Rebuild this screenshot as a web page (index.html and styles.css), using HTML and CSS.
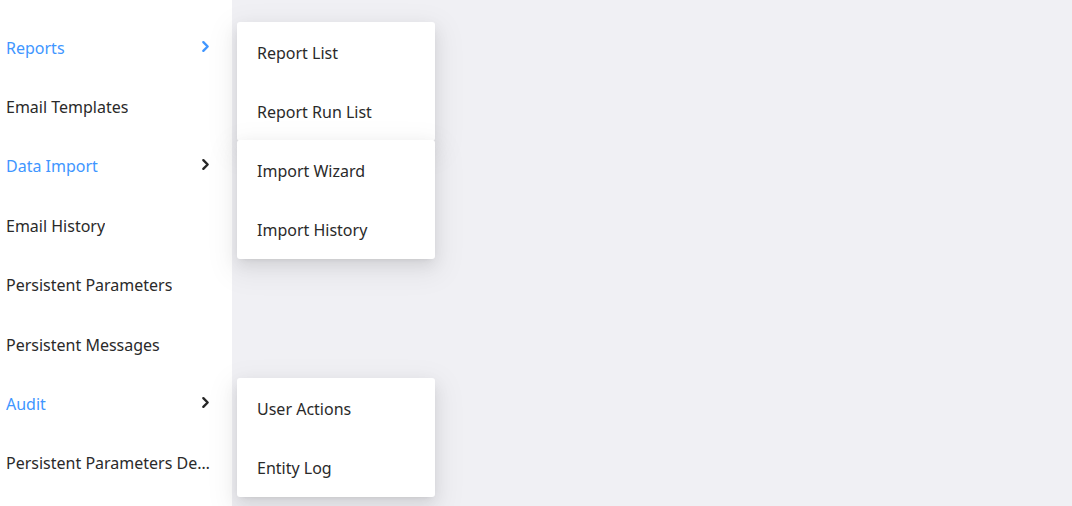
FILE: index.html
```html
<!DOCTYPE html>
<html>
<head>
<meta charset="utf-8">
<link rel="stylesheet" href="styles.css">
</head>
<body>
<div class="page">
  <nav class="sidebar">
    <ul class="menu">
      <li class="item active"><span class="label">Reports</span><svg class="chev" viewBox="0 0 8 12"><path d="M2 2l4 4-4 4" /></svg></li>
      <li class="item"><span class="label">Email Templates</span></li>
      <li class="item active-sub"><span class="label">Data Import</span><svg class="chev" viewBox="0 0 8 12"><path d="M2 2l4 4-4 4" /></svg></li>
      <li class="item"><span class="label">Email History</span></li>
      <li class="item"><span class="label">Persistent Parameters</span></li>
      <li class="item"><span class="label">Persistent Messages</span></li>
      <li class="item active-sub"><span class="label">Audit</span><svg class="chev" viewBox="0 0 8 12"><path d="M2 2l4 4-4 4" /></svg></li>
      <li class="item"><span class="label">Persistent Parameters Details</span></li>
    </ul>
  </nav>
  <main class="content"></main>
  <ul class="popup popup-reports">
    <li class="pitem">Report List</li>
    <li class="pitem">Report Run List</li>
  </ul>
  <ul class="popup popup-import">
    <li class="pitem">Import Wizard</li>
    <li class="pitem">Import History</li>
  </ul>
  <ul class="popup popup-audit">
    <li class="pitem">User Actions</li>
    <li class="pitem">Entity Log</li>
  </ul>
</div>
</body>
</html>
```
FILE: styles.css
```css
* { box-sizing: border-box; }
html, body { margin: 0; padding: 0; }
body {
  font-family: "Noto Sans", "Open Sans", sans-serif;
  font-size: 16px;
  color: #2a2a2a;
  background: #f0f0f4;
  width: 1072px;
  height: 506px;
  overflow: hidden;
}
.page {
  position: relative;
  display: flex;
  height: 506px;
}
.sidebar {
  width: 232px;
  background: #fff;
  height: 100%;
  padding-top: 18px;
}
.menu { list-style: none; margin: 0; padding: 0; }
.item {
  height: 59.4px;
  display: flex;
  align-items: center;
  justify-content: space-between;
  padding: 0 22px 0 6px;
  white-space: nowrap;
}
.label {
  overflow: hidden;
  text-overflow: ellipsis;
  max-width: 204px;
}
.item.active, .item.active-sub { color: #4096ff; }
.chev {
  width: 9px;
  height: 13px;
  flex: none;
  margin-top: -3px;
  fill: none;
  stroke: #262626;
  stroke-width: 2.2;
  stroke-linecap: round;
  stroke-linejoin: round;
}
.item.active .chev { stroke: #4096ff; }
.content { flex: 1; }
.popup {
  position: absolute;
  left: 237px;
  width: 198px;
  margin: 0;
  padding: 0;
  list-style: none;
  background: #fff;
  border-radius: 3px;
  box-shadow: 0 6px 16px rgba(0,0,0,0.08), 0 3px 6px -4px rgba(0,0,0,0.12), 0 9px 28px 8px rgba(0,0,0,0.05);
}
.pitem {
  height: 59.5px;
  display: flex;
  align-items: center;
  padding: 2px 20px 0 20px;
  white-space: nowrap;
}
.popup-reports { top: 22px; }
.popup-import { top: 140px; }
.popup-audit { top: 378px; }
```
